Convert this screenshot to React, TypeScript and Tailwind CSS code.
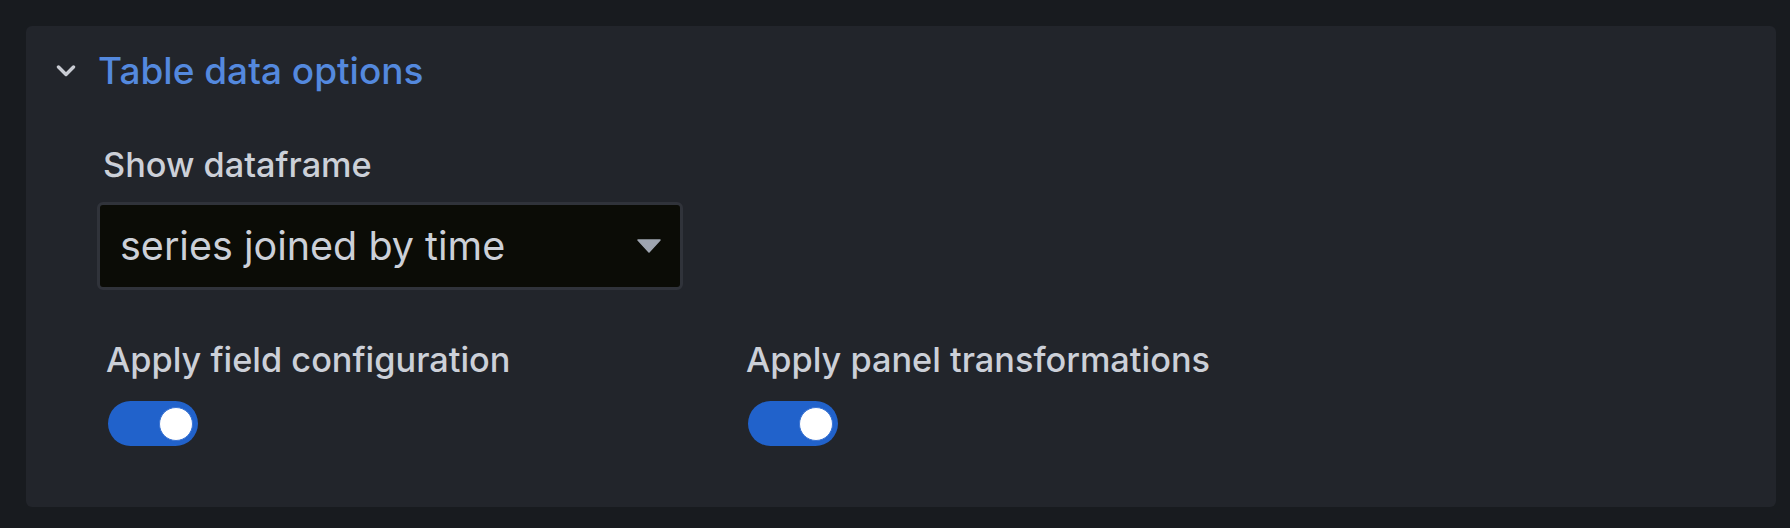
import React, { useState } from 'react';

const font = { fontFamily: 'Inter, "Noto Sans", sans-serif' };

const Toggle: React.FC<{ on: boolean; onChange: () => void }> = ({ on, onChange }) => (
    <button
        type="button"
        onClick={onChange}
        className={`flex h-[45px] w-[90px] items-center rounded-full px-[5px] ${on ? 'justify-end bg-[#2162cb]' : 'justify-start bg-[#3a3d44]'}`}
    >
        <span className="block h-[34px] w-[34px] rounded-full border border-[#3b74d4] bg-white" />
    </button>
);

export default function App() {
    const [fieldConfig, setFieldConfig] = useState(true);
    const [transforms, setTransforms] = useState(true);

    return (
        <div className="min-h-[528px] w-full bg-[#181b1f] pl-[26px] pr-[14px] pt-[26px] pb-[21px]" style={font}>
            <div className="rounded-[6px] bg-[#22252b] pt-[26px] pb-[61px]">
                {/* header */}
                <div className="flex items-center pl-[30px]">
                    <svg width="20" height="12" viewBox="0 0 20 12" className="mr-[22px]">
                        <polyline points="2.5,2 10,9.5 17.5,2" fill="none" stroke="#c9ccd3" strokeWidth="3.4" strokeLinecap="round" strokeLinejoin="round" />
                    </svg>
                    <span className="text-[37px] leading-[37px] font-medium text-[#5489de]">Table data options</span>
                </div>

                <div className="mt-[59px] pl-[71px]">
                    <div className="text-[34.3px] leading-[34px] font-medium text-[#ccd0d8] pl-[6px]">Show dataframe</div>
                    <div className="mt-[20px] flex h-[88px] w-[586px] items-center justify-between rounded-[6px] border-[3px] border-[#30333a] bg-[#0b0c06] pl-[20px] pr-[19px]">
                        <span className="text-[39.5px] leading-[40px] text-[#ccd0d8]">series joined by time</span>
                        <svg width="24" height="14" viewBox="0 0 24 14">
                            <path d="M1 1 L23 1 L12 13 Z" fill="#9fa5b0" stroke="#9fa5b0" strokeWidth="1.5" strokeLinejoin="round" />
                        </svg>
                    </div>

                    <div className="mt-[53px] grid grid-cols-[640px_640px] pl-[9px]">
                        <div>
                            <div className="text-[34.3px] leading-[34px] font-medium text-[#ccd0d8]">Apply field configuration</div>
                            <div className="mt-[24px] pl-[2px]">
                                <Toggle on={fieldConfig} onChange={() => setFieldConfig(!fieldConfig)} />
                            </div>
                        </div>
                        <div>
                            <div className="text-[34.3px] leading-[34px] font-medium text-[#ccd0d8]">Apply panel transformations</div>
                            <div className="mt-[24px] pl-[2px]">
                                <Toggle on={transforms} onChange={() => setTransforms(!transforms)} />
                            </div>
                        </div>
                    </div>
                </div>
            </div>
        </div>
    );
}
